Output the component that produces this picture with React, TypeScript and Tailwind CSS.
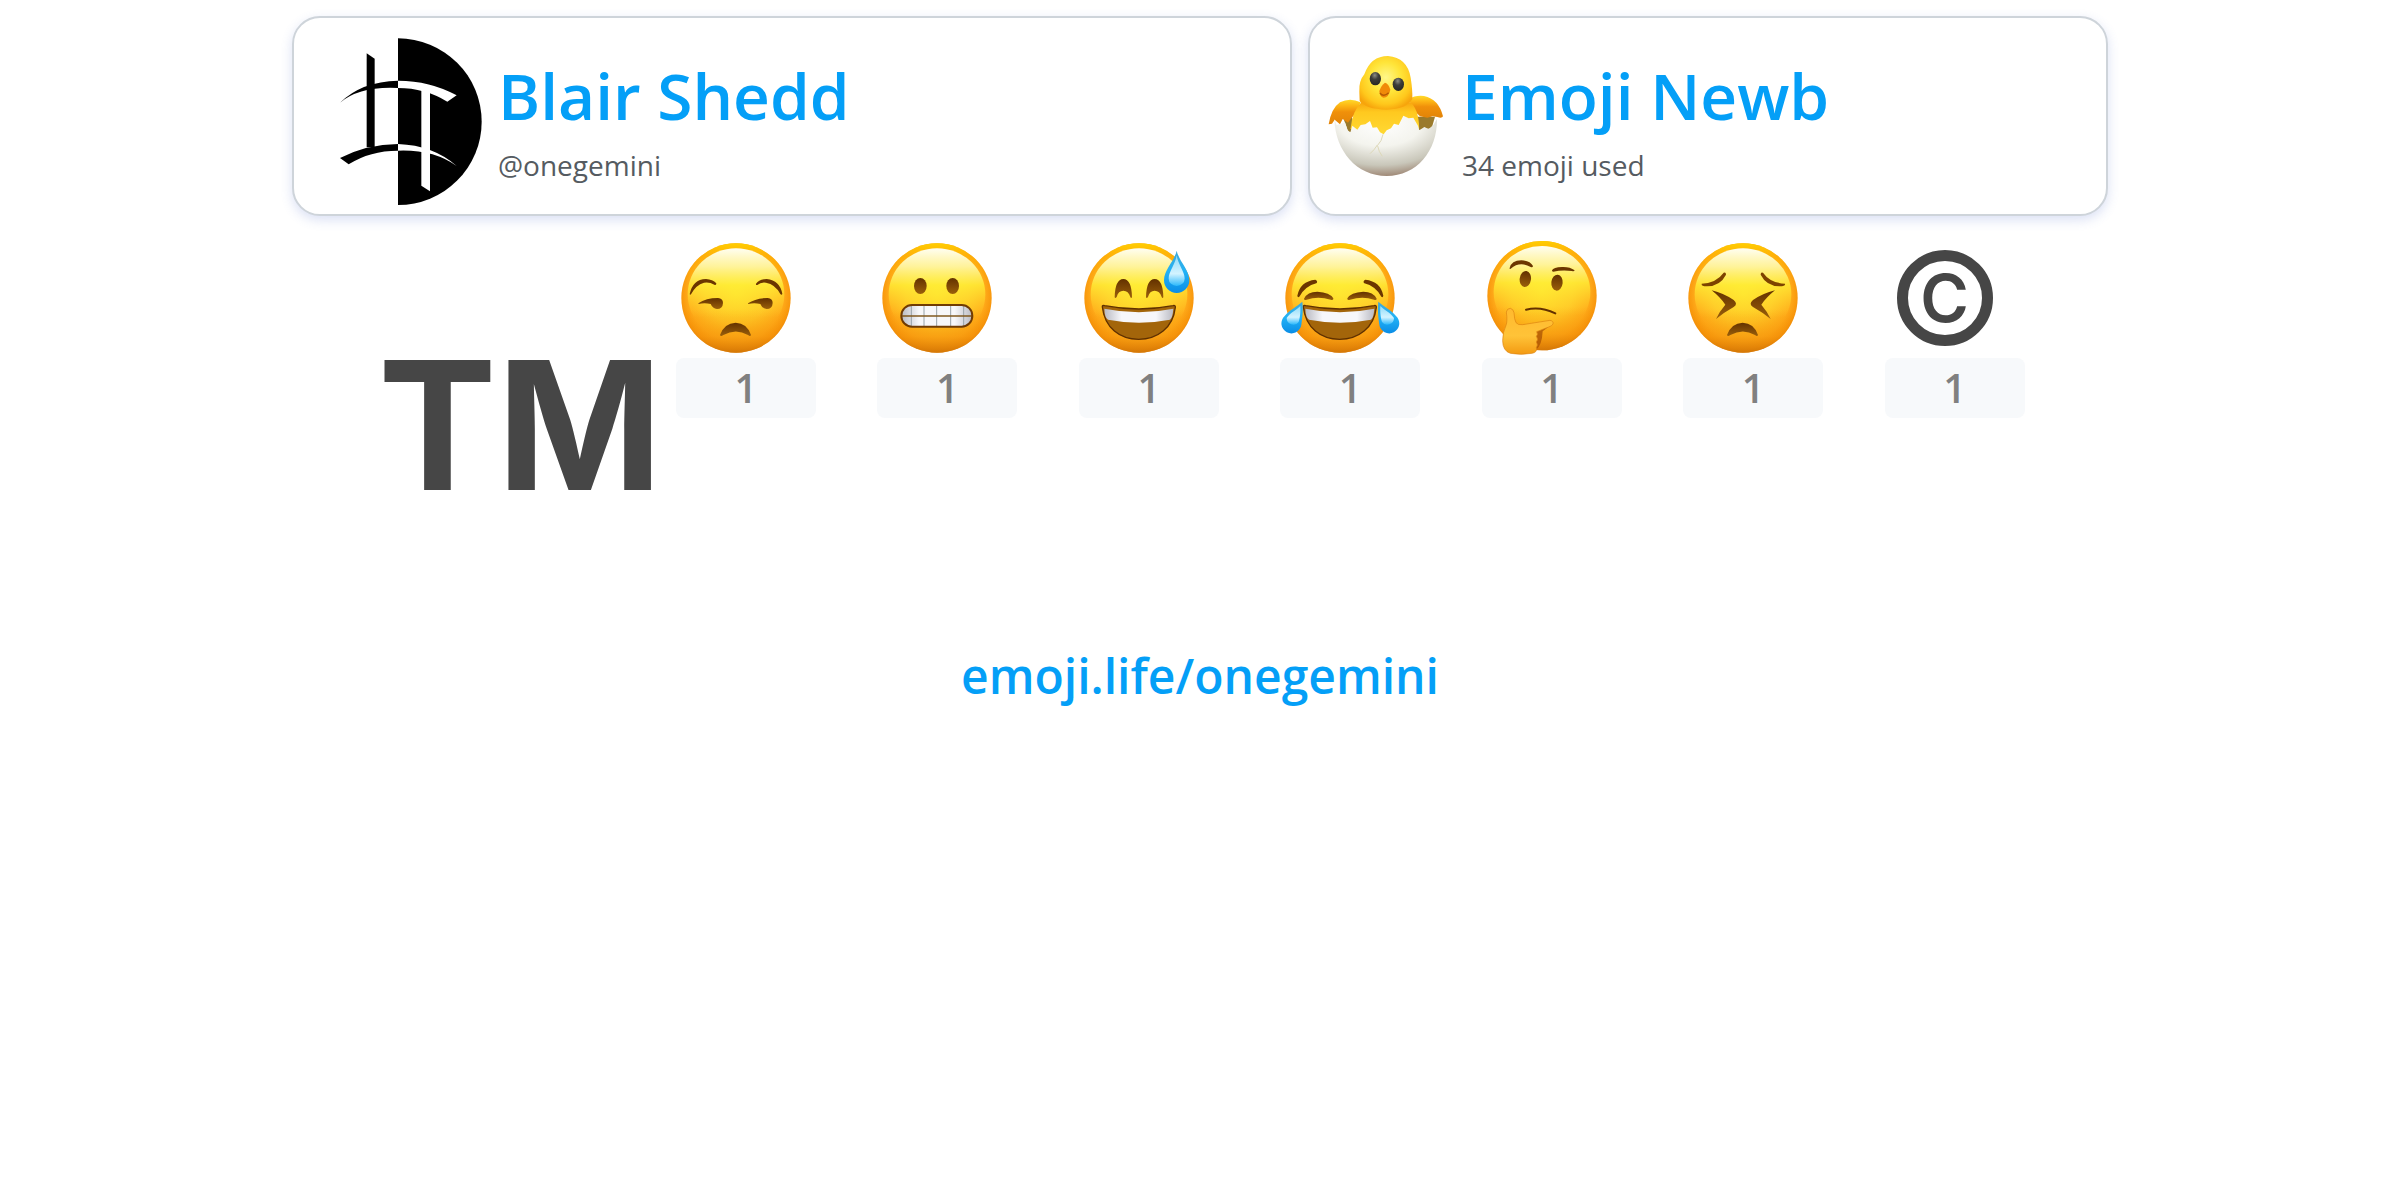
import React from "react";

interface FaceProps {
  label: string;
  cy?: number;
  children: React.ReactNode;
}

interface EmojiUse {
  name: string;
  count: number;
  icon: React.ReactNode;
}

// Gradients shared by every emoji drawing on the page
const EmojiDefs: React.FC = () => (
  <svg className="absolute size-0" aria-hidden="true">
    <defs>
      <radialGradient id="skin" cx="0.5" cy="0.46" r="0.56">
        <stop offset="0" stopColor="#ffe02c" />
        <stop offset="0.5" stopColor="#ffc727" />
        <stop offset="0.78" stopColor="#ffab1a" />
        <stop offset="0.9" stopColor="#f8960c" />
        <stop offset="1" stopColor="#dd7905" />
      </radialGradient>
      <linearGradient id="rim" x1="0" y1="0" x2="0" y2="1">
        <stop offset="0" stopColor="#ffcf00" />
        <stop offset="0.12" stopColor="#ffb400" stopOpacity="0.6" />
        <stop offset="0.35" stopColor="#ffb000" stopOpacity="0" />
        <stop offset="0.6" stopColor="#f59200" stopOpacity="0" />
        <stop offset="0.85" stopColor="#f29008" stopOpacity="0.5" />
        <stop offset="1" stopColor="#cf7406" stopOpacity="0.8" />
      </linearGradient>
      <linearGradient id="shine" x1="0" y1="0" x2="0" y2="1">
        <stop offset="0" stopColor="#fffef2" />
        <stop offset="0.2" stopColor="#fff9a8" stopOpacity="0.9" />
        <stop offset="0.4" stopColor="#fff238" stopOpacity="0.75" />
        <stop offset="0.75" stopColor="#ffdc2e" stopOpacity="0" />
      </linearGradient>
      <linearGradient id="brown" x1="0" y1="0" x2="0" y2="1">
        <stop offset="0" stopColor="#633100" />
        <stop offset="1" stopColor="#9a5f0a" />
      </linearGradient>
      <linearGradient id="teeth" x1="0" y1="0" x2="1" y2="0">
        <stop offset="0" stopColor="#b9bac2" />
        <stop offset="0.25" stopColor="#f7f7fa" />
        <stop offset="0.75" stopColor="#f7f7fa" />
        <stop offset="1" stopColor="#b9bac2" />
      </linearGradient>
      <linearGradient id="drop" x1="0" y1="0" x2="0" y2="1">
        <stop offset="0" stopColor="#3fa9d8" />
        <stop offset="0.5" stopColor="#22b2f6" />
        <stop offset="1" stopColor="#0a8de6" />
      </linearGradient>
      <linearGradient id="dropShine" x1="0" y1="0" x2="0" y2="1">
        <stop offset="0" stopColor="#8fdcfa" />
        <stop offset="0.6" stopColor="#d3f3ff" />
        <stop offset="1" stopColor="#2bb8fb" />
      </linearGradient>
      <linearGradient id="hand" x1="0" y1="0" x2="0" y2="1">
        <stop offset="0" stopColor="#ffb92e" />
        <stop offset="0.6" stopColor="#ffc338" />
        <stop offset="1" stopColor="#f39a12" />
      </linearGradient>
      <radialGradient id="chickHead" cx="0.5" cy="0.4" r="0.62">
        <stop offset="0" stopColor="#fff78a" />
        <stop offset="0.45" stopColor="#ffe53a" />
        <stop offset="0.8" stopColor="#ffc81c" />
        <stop offset="1" stopColor="#f7a50c" />
      </radialGradient>
      <linearGradient id="chickBody" x1="0" y1="0" x2="0" y2="1">
        <stop offset="0" stopColor="#f8a60e" />
        <stop offset="0.25" stopColor="#ffc91f" />
        <stop offset="1" stopColor="#ffde3a" />
      </linearGradient>
      <linearGradient id="wing" x1="0" y1="0" x2="0" y2="1">
        <stop offset="0" stopColor="#ffda2a" />
        <stop offset="0.25" stopColor="#fdb514" />
        <stop offset="0.5" stopColor="#f0900a" />
        <stop offset="1" stopColor="#e28408" />
      </linearGradient>
      <radialGradient id="shell" cx="0.45" cy="0.1" r="0.9">
        <stop offset="0" stopColor="#ffffff" />
        <stop offset="0.45" stopColor="#f4f4ee" />
        <stop offset="0.8" stopColor="#c9c7ba" />
        <stop offset="1" stopColor="#a08a78" />
      </radialGradient>
      <radialGradient id="chickEye" cx="0.45" cy="0.25" r="0.7">
        <stop offset="0" stopColor="#8c8c84" />
        <stop offset="0.45" stopColor="#3d3d3a" />
        <stop offset="1" stopColor="#2a2a26" />
      </radialGradient>
    </defs>
  </svg>
);

const Face: React.FC<FaceProps> = ({ label, cy = 180, children }) => (
  <svg viewBox="0 0 360 360" className="size-[120px]" role="img" aria-label={label}>
    <circle cx="180" cy={cy} r="164" fill="url(#skin)" />
    <circle cx="180" cy={cy} r="164" fill="url(#rim)" />
    <ellipse cx="180" cy={cy - 11} rx="145" ry="138" fill="url(#shine)" />
    {children}
  </svg>
);

const Frown: React.FC = () => (
  <path
    d="M132 291Q145 255 179 254Q213 255 225 291Q223 297 216 291Q180 270 142 291Q134 297 132 291Z"
    fill="url(#brown)"
  />
);

const Grin: React.FC = () => (
  <g>
    <path
      d="M70 207Q69 201 77 203Q180 223 282 203Q290 201 289 208C282 270 235 304 179 304C123 304 77 270 70 207Z"
      fill="#a3650a"
      stroke="#5f3000"
      strokeWidth="4"
    />
    <path
      d="M76 212Q180 233 283 212Q281 240 273 245Q180 263 87 245Q77 240 76 212Z"
      fill="url(#teeth)"
    />
  </g>
);

const Mirrored: React.FC<{ children: React.ReactNode }> = ({ children }) => (
  <>
    {children}
    <g transform="translate(362 0) scale(-1 1)">{children}</g>
  </>
);

const Unamused: React.FC = () => (
  <Face label="unamused face">
    <g fill="#6b3600">
      <path d="M41 169Q50 124 90 123Q110 124 121 136Q121 143 115 140Q100 131 84 134Q60 140 44 170Z" />
      <path d="M240 137Q250 123 272 123Q312 127 319 168Q317 173 313 168Q298 139 270 134Q254 132 244 141Q239 142 240 137Z" />
    </g>
    <g fill="url(#brown)">
      <path d="M67 196Q90 180 126 180Q141 182 141 195Q140 213 123 213Q110 212 104 198Q85 193 68 198Z" />
      <path d="M216 196Q239 180 275 180Q290 182 290 195Q289 213 272 213Q259 212 253 198Q234 193 217 198Z" />
    </g>
    <Frown />
  </Face>
);

const Grimacing: React.FC = () => (
  <Face label="grimacing face">
    <ellipse cx="130" cy="144" rx="19" ry="24" fill="url(#brown)" />
    <ellipse cx="227" cy="144" rx="19" ry="24" fill="url(#brown)" />
    <rect x="73" y="201" width="213" height="65" rx="32" fill="url(#teeth)" />
    <path
      d="M103 203V264M141 203V264M179 203V264M221 203V264M260 203V264"
      stroke="#98a2a8"
      strokeWidth="3"
    />
    <path d="M74 234H285" stroke="#80591f" strokeWidth="5" />
    <rect
      x="73"
      y="201"
      width="213"
      height="65"
      rx="32"
      fill="none"
      stroke="#703b04"
      strokeWidth="6"
    />
  </Face>
);

const GrinningSweat: React.FC = () => (
  <Face label="grinning face with sweat">
    <g fill="url(#brown)">
      <path d="M107 178Q108 124 133 123Q158 124 159 178Q156 182 154 177Q148 158 133 158Q118 158 113 177Q109 182 107 178Z" />
      <path d="M201 178Q202 124 227 123Q252 124 253 178Q250 182 248 177Q242 158 227 158Q212 158 207 177Q203 182 201 178Z" />
    </g>
    <Grin />
    <path
      d="M293 38C300 70 331 95 331 127A38 38 0 0 1 255 127C255 95 286 70 293 38Z"
      fill="url(#drop)"
    />
    <path
      d="M293 52C297 80 317 100 317 122A24 22 0 0 1 269 122C269 100 289 80 293 52Z"
      fill="url(#dropShine)"
    />
  </Face>
);

const TearsOfJoy: React.FC = () => (
  <Face label="face with tears of joy">
    <Mirrored>
      <path
        d="M52 173Q60 130 106 125Q115 130 109 136Q76 144 58 176Q53 180 52 173Z"
        fill="#6b3600"
      />
      <path
        d="M72 182Q82 161 112 161Q150 163 160 181Q161 188 152 185Q114 174 80 185Q72 188 72 182Z"
        fill="url(#brown)"
      />
    </Mirrored>
    <Grin />
    <Mirrored>
      <path
        d="M67 191C70 218 67 238 64 260A30 30 0 1 1 14 234C30 214 50 207 67 191Z"
        fill="url(#drop)"
      />
      <path
        d="M61 204C62 225 60 238 56 252A20 20 0 0 1 20 240C32 222 48 218 61 204Z"
        fill="url(#dropShine)"
      />
    </Mirrored>
  </Face>
);

const Thinking: React.FC = () => (
  <Face label="thinking face" cy={173}>
    <g fill="#6b3600">
      <path d="M83 90Q88 68 118 67Q144 68 153 84Q152 90 146 87Q114 68 86 92Q82 94 83 90Z" />
      <path d="M210 97Q214 88 240 87Q264 86 278 97Q276 101 270 99Q240 95 214 101Q209 101 210 97Z" />
    </g>
    <g fill="url(#brown)">
      <ellipse cx="130" cy="123" rx="17" ry="24" transform="rotate(8 130 123)" />
      <ellipse cx="225" cy="134" rx="17" ry="24" transform="rotate(6 225 134)" />
    </g>
    <path
      d="M132 215Q175 204 220 226"
      fill="none"
      stroke="#633100"
      strokeWidth="6"
      strokeLinecap="round"
    />
    <path d="M100 262L214 256L182 280Q180 322 162 336Z" fill="#a85204" opacity="0.75" />
    <path
      d="M73 222Q75 211 85 211Q94 213 96 224Q97 245 102 254Q108 262 122 260L204 247Q215 249 213 258Q210 264 200 267L164 281Q169 290 163 295Q170 304 163 312Q169 322 163 328Q167 343 150 346Q115 352 85 346Q62 338 62 308Q62 282 72 262Q77 250 73 222Z"
      fill="url(#hand)"
      stroke="#dc8410"
      strokeWidth="2"
    />
  </Face>
);

const Persevering: React.FC = () => (
  <Face label="persevering face">
    <Mirrored>
      <path
        d="M56 137Q100 135 122 104Q129 101 129 110Q112 144 72 145Q54 145 56 137Z"
        fill="#7d4300"
      />
      <path
        d="M86 157Q122 166 152 186Q166 198 152 207Q125 222 99 243Q108 222 127 200Q112 178 86 157Z"
        fill="url(#brown)"
      />
    </Mirrored>
    <Frown />
  </Face>
);

const Copyright: React.FC = () => (
  <div className="flex size-[120px] items-center justify-center">
    <span className="flex size-24 items-center justify-center rounded-full border-11 border-[#464646] font-[Inter] text-[66px] leading-none font-semibold text-[#464646]">
      C
    </span>
  </div>
);

const HatchingChick: React.FC = () => (
  <svg viewBox="18 33 360 360" className="size-[120px] shrink-0" role="img" aria-label="hatching chick">
    <path d="M72 225L95 215L110 262L85 262Z" fill="#9a7a2c" />
    <path d="M290 215L345 215L335 250L295 256Z" fill="#9a7a2c" />
    <path
      d="M26 238Q34 190 60 172Q90 156 122 172L108 205Q92 220 84 233L68 222L60 238L44 224L36 236Z"
      fill="url(#wing)"
    />
    <path
      d="M268 162Q285 150 312 153Q356 162 369 214Q366 221 352 216L338 214L322 218L300 214L275 190Z"
      fill="url(#wing)"
    />
    <path
      d="M92 250Q96 200 124 172H272Q300 200 297 262L270 290H110Z"
      fill="url(#chickBody)"
    />
    <path
      d="M118 140Q116 108 133 88Q152 33 204 33Q262 38 272 98Q278 135 277 162Q262 192 200 194Q136 192 119 168Z"
      fill="url(#chickHead)"
    />
    <ellipse cx="166" cy="101" rx="17" ry="20" fill="url(#chickEye)" />
    <ellipse cx="235" cy="118" rx="17" ry="20" fill="url(#chickEye)" />
    <path
      d="M195 113Q206 116 211 134Q207 157 190 158Q178 154 178 138Q184 120 195 113Z"
      fill="#f08a08"
    />
    <path d="M180 144Q190 158 206 143" fill="none" stroke="#b45a04" strokeWidth="4" />
    <path
      d="M43 222L50 240L63 236L75 232L83 256L91 262L97 242L112 254L122 240L136 238L150 228L158 248L171 247L180 262L191 268L200 256L213 250L222 236L236 240L250 212L266 220L280 218L294 242L298 256L313 246L326 252L340 240L351 222C352 318 290 393 200 393C110 393 46 318 43 222Z"
      fill="url(#shell)"
    />
    <path
      d="M189 268Q186 288 172 302M172 300Q164 314 150 326M173 303Q176 320 187 334"
      fill="none"
      stroke="#ddd8b8"
      strokeWidth="3"
    />
  </svg>
);

const Avatar: React.FC = () => (
  <svg viewBox="-48 24 504 504" className="size-[168px] shrink-0" role="img" aria-label="Blair Shedd">
    <path d="M204 25A251 250 0 0 1 204 525Z" />
    <path d="M110 70L134 86V352H110Z" />
    <path d="M30 218Q95 154 204 152V174Q90 168 30 218Z" />
    <path d="M30 384Q110 343 204 342V362Q120 362 56 403Z" />
    <g fill="#fff">
      <path d="M204 152Q300 152 380 196L352 215Q285 174 204 174Z" />
      <path d="M204 342Q310 346 380 408Q310 358 204 362Z" />
      <path d="M274 176H300V484L274 467Z" />
    </g>
  </svg>
);

const EMOJI: EmojiUse[] = [
  { name: "unamused", count: 1, icon: <Unamused /> },
  { name: "grimacing", count: 1, icon: <Grimacing /> },
  { name: "sweat_smile", count: 1, icon: <GrinningSweat /> },
  { name: "joy", count: 1, icon: <TearsOfJoy /> },
  { name: "thinking", count: 1, icon: <Thinking /> },
  { name: "persevere", count: 1, icon: <Persevering /> },
  { name: "copyright", count: 1, icon: <Copyright /> },
];

const CARD =
  "flex items-start rounded-[28px] border-2 border-[#ced4da] bg-white shadow-[0_4px_12px_rgba(70,100,200,0.2)]";

interface CardTextProps {
  title: string;
  detail: string;
}

const CardText: React.FC<CardTextProps> = ({ title, detail }) => (
  <div className="pt-[38px]">
    <h2 className="text-[64px] leading-[80px] font-semibold text-[#049ff7]">{title}</h2>
    <p className="mt-2 text-[28px] leading-[42px] text-[#555b61]">{detail}</p>
  </div>
);

const App: React.FC = () => (
  <main className="bg-white px-4 pt-4 font-['Open_Sans',sans-serif]">
    <EmojiDefs />
    <div className="mx-auto max-w-[1816px]">
      <header className="grid grid-cols-[5fr_4fr] gap-4">
        <section className={`${CARD} h-[200px] gap-4 pl-5`}>
          <div className="pt-5">
            <Avatar />
          </div>
          <CardText title="Blair Shedd" detail="@onegemini" />
        </section>
        <section className={`${CARD} h-[200px] gap-4 pl-4`}>
          <div className="pt-[38px]">
            <HatchingChick />
          </div>
          <CardText title="Emoji Newb" detail="34 emoji used" />
        </section>
      </header>

      <section className="flex pt-[22px] pr-[22px] pl-[86px]">
        <div className="w-[298px] shrink-0 pt-[92px] font-[Inter] text-[178px] leading-[192px] font-bold text-[#464646]">
          TM
        </div>
        <ul className="grid flex-1 grid-cols-7">
          {EMOJI.map(({ name, count, icon }) => (
            <li key={name}>
              {icon}
              <div className="w-[140px] rounded-lg bg-[#f7f9fb] text-center text-[40px] leading-[60px] font-semibold text-[#808080]">
                {count}
              </div>
            </li>
          ))}
        </ul>
      </section>

      <footer className="pt-[118px] text-center">
        <a href="#onegemini" className="text-5xl leading-[72px] font-semibold text-[#049ff7]">
          emoji.life/onegemini
        </a>
      </footer>
    </div>
  </main>
);

export default App;
